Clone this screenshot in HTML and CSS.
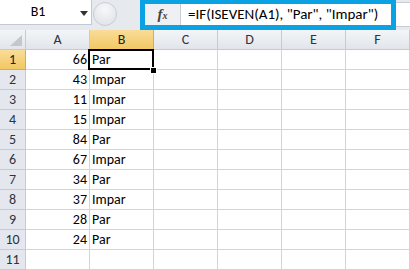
FILE: index.html
```html
<!DOCTYPE html>
<html lang="es">
<head>
  <meta charset="UTF-8">
  <title>Hoja de cálculo</title>
  <link rel="stylesheet" href="styles.css">
</head>
<body>

<div class="bar">
  <div class="namebox">
    <span class="ref">B1</span>
    <svg class="arrow" width="8" height="5" viewBox="0 0 8 5"><path d="M0 0h8L4 5z" fill="#333"/></svg>
  </div>
  <div class="grip"><span></span></div>
  <div class="fx-wrap">
    <div class="fx"><i>f</i><small>x</small></div>
    <div class="formula">=IF(ISEVEN(A1), "Par", "Impar")</div>
  </div>
  <div class="rest"></div>
</div>

<div class="sheet" id="sheet">
  <div class="corner"></div>
  <div class="col">A</div>
  <div class="col sel">B</div>
  <div class="col">C</div>
  <div class="col">D</div>
  <div class="col">E</div>
  <div class="col">F</div>
</div>

<script>
  const values = [66, 43, 11, 15, 84, 67, 34, 37, 28, 24];
  const sheet = document.getElementById('sheet');

  for (let r = 1; r <= 11; r++) {
    const v = values[r - 1];
    let html = `<div class="row${r === 1 ? ' sel' : ''}">${r}</div>`;
    html += `<div class="cell num">${v !== undefined ? v : ''}</div>`;
    html += `<div class="cell${r === 1 ? ' active' : ''}">${v !== undefined ? (v % 2 === 0 ? 'Par' : 'Impar') : ''}</div>`;
    for (let c = 0; c < 4; c++) html += '<div class="cell"></div>';
    sheet.insertAdjacentHTML('beforeend', html);
  }
</script>

</body>
</html>
```

FILE: styles.css
```css
body {
  margin: 0;
  font-family: Calibri, 'Liberation Sans', sans-serif;
  font-size: 14px;
  color: #000;
  background: #fff;
  width: 410px;
  height: 270px;
  overflow: hidden;
}

.bar {
  display: flex;
  height: 30px;
  background: #e6e9ee;
}

.namebox {
  width: 92px;
  height: 25px;
  background: #fff;
  border-bottom: 1px solid #c3c9d2;
  border-right: 1px solid #c3c9d2;
  box-sizing: border-box;
  display: flex;
  align-items: center;
}

.namebox .ref {
  width: 76px;
  text-align: center;
  line-height: 24px;
}

.namebox .arrow {
  margin-left: 4px;
  margin-top: 2px;
}

.grip {
  width: 48px;
  padding-top: 2px;
}

.grip span {
  display: block;
  width: 24px;
  height: 24px;
  margin-left: 1px;
  border-radius: 50%;
  background: radial-gradient(circle at 50% 30%, #f7f8fa, #dcdfe4);
  border: 1px solid #c9cdd3;
  box-sizing: border-box;
}

.fx-wrap {
  width: 256px;
  height: 30px;
  border: 5px solid #0ba2e3;
  border-top-width: 4px;
  box-sizing: border-box;
  display: flex;
  background: #fff;
}

.fx {
  width: 35px;
  background: #eef0f3;
  border-right: 1px solid #c9cdd3;
  text-align: center;
  font-family: 'Liberation Serif', serif;
  font-size: 15px;
  line-height: 20px;
  color: #444;
}

.fx i {
  font-weight: bold;
}

.fx small {
  font-size: 10px;
  font-style: italic;
  font-weight: bold;
}

.formula {
  padding-left: 7px;
  font-size: 15px;
  line-height: 20px;
  white-space: nowrap;
}

.rest {
  flex-grow: 1;
  margin-top: 2px;
  height: 23px;
  background: #fff;
  border-top: 1px solid #c9cdd3;
  border-bottom: 1px solid #c9cdd3;
}

.sheet {
  display: grid;
  grid-template-columns: 26px repeat(6, 64px);
  grid-auto-rows: 20px;
}

.sheet > div {
  box-sizing: border-box;
  border-right: 1px solid #d4d4d4;
  border-bottom: 1px solid #d4d4d4;
  line-height: 19px;
  white-space: nowrap;
}

.corner {
  position: relative;
  background: linear-gradient(#f3f5f8, #e1e5ea);
  border-color: #c5cbd3 !important;
}

.corner::after {
  content: "";
  position: absolute;
  right: 3px;
  bottom: 3px;
  border-left: 12px solid transparent;
  border-bottom: 11px solid #c3c8cf;
}

.col, .row {
  background: linear-gradient(#f3f5f8, #e1e5ea);
  border-color: #c5cbd3 !important;
  text-align: center;
  color: #2b3440;
}

.row {
  background: #e4e8ee;
}

.col.sel, .row.sel {
  background: linear-gradient(#f9dc97, #f3c864);
  border-color: #e4a93f !important;
  color: #1c2430;
}

.cell {
  padding: 0 2px;
}

.num {
  text-align: right;
}

.active {
  position: relative;
}

.active::before {
  content: "";
  position: absolute;
  left: -2px;
  top: -1px;
  width: 66px;
  height: 21px;
  border: 2px solid #000;
  box-sizing: border-box;
}

.active::after {
  content: "";
  position: absolute;
  left: 60px;
  top: 17px;
  width: 5px;
  height: 5px;
  background: #000;
  border: 1px solid #fff;
}
```
